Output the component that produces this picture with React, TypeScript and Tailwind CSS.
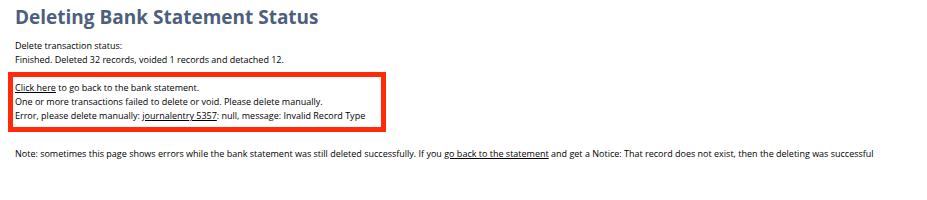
export default function App() {
  return (
    <main
      className="px-[15px] pt-[4px] text-[9px] leading-[14px] text-black bg-white"
      style={{ fontFamily: '"Open Sans", sans-serif' }}
    >
      <h1 className="text-[19px] font-bold leading-[26px] text-[#4d5f7c]">
        Deleting Bank Statement Status
      </h1>
      <div className="mt-[9px]">
        <p>Delete transaction status:</p>
        <p>Finished. Deleted 32 records, voided 1 records and detached 12.</p>
      </div>
      <div className="mt-[5px] -ml-[7px] w-[378px] border-[5px] border-[#ff2a0a] px-[2px] py-[4px]">
        <p>
          <a href="#" className="underline">Click here</a> to go back to the bank statement.
        </p>
        <p>One or more transactions failed to delete or void. Please delete manually.</p>
        <p>
          Error, please delete manually: <a href="#" className="underline">journalentry 5357</a>: null,
          message: Invalid Record Type
        </p>
      </div>
      <p className="mt-[15px]">
        Note: sometimes this page shows errors while the bank statement was still deleted successfully. If you{" "}
        <a href="#" className="underline">go back to the statement</a> and get a Notice: That record does not
        exist, then the deleting was successful
      </p>
    </main>
  );
}
